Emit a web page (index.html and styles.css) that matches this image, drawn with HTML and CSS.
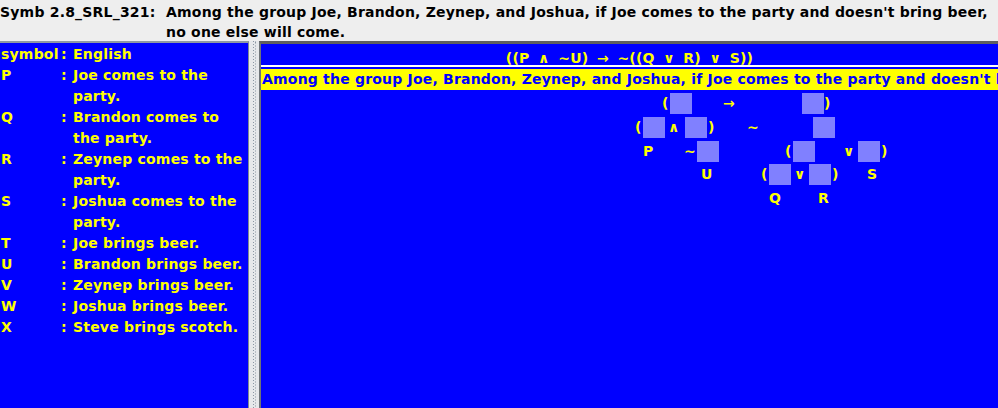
FILE: index.html
```html
<!DOCTYPE html>
<html>
<head>
<meta charset="utf-8">
<link rel="stylesheet" href="styles.css">
</head>
<body>
<header class="top">
  <div class="label">Symb 2.8_SRL_321:</div>
  <div class="desc">Among the group Joe, Brandon, Zeynep, and Joshua, if Joe comes to the party and doesn't bring beer, no one else will come.</div>
</header>
<main class="main">
  <section class="legend">
    <div class="row"><span class="sym">symbol</span><span class="colon">:</span><span class="eng">English</span></div>
    <div class="row"><span class="sym">P</span><span class="colon">:</span><span class="eng">Joe comes to the party.</span></div>
    <div class="row"><span class="sym">Q</span><span class="colon">:</span><span class="eng">Brandon comes to the party.</span></div>
    <div class="row"><span class="sym">R</span><span class="colon">:</span><span class="eng">Zeynep comes to the party.</span></div>
    <div class="row"><span class="sym">S</span><span class="colon">:</span><span class="eng">Joshua comes to the party.</span></div>
    <div class="row"><span class="sym">T</span><span class="colon">:</span><span class="eng">Joe brings beer.</span></div>
    <div class="row"><span class="sym">U</span><span class="colon">:</span><span class="eng">Brandon brings beer.</span></div>
    <div class="row"><span class="sym">V</span><span class="colon">:</span><span class="eng">Zeynep brings beer.</span></div>
    <div class="row"><span class="sym">W</span><span class="colon">:</span><span class="eng">Joshua brings beer.</span></div>
    <div class="row"><span class="sym">X</span><span class="colon">:</span><span class="eng">Steve brings scotch.</span></div>
  </section>
  <div class="splitter"><span class="grip"></span><span class="grip grip2"></span></div>
  <section class="work">
    <div class="formula">((P ∧ ~U) → ~((Q ∨ R) ∨ S))</div>
    <div class="sentence">Among the group Joe, Brandon, Zeynep, and Joshua, if Joe comes to the party and doesn't bring beer, no one else will come.</div>
    <div class="tree">
      <span class="box r1" style="left:409px"></span>
      <span class="box r1" style="left:541px"></span>
      <span class="box r2" style="left:382px"></span>
      <span class="box r2" style="left:424px"></span>
      <span class="box r2" style="left:552px"></span>
      <span class="box r3" style="left:436px"></span>
      <span class="box r3" style="left:532px"></span>
      <span class="box r3" style="left:597px"></span>
      <span class="box r4" style="left:508px"></span>
      <span class="box r4" style="left:548px"></span>

      <span class="g r1" style="left:401px">(</span>
      <span class="g r1" style="left:462px">→</span>
      <span class="g r1" style="left:563px">)</span>

      <span class="g r2" style="left:374px">(</span>
      <span class="g r2" style="left:407px">∧</span>
      <span class="g r2" style="left:447px">)</span>
      <span class="g r2" style="left:486px">~</span>

      <span class="g r3" style="left:382px">P</span>
      <span class="g r3" style="left:423px">~</span>
      <span class="g r3" style="left:524px">(</span>
      <span class="g r3" style="left:582px">∨</span>
      <span class="g r3" style="left:620px">)</span>

      <span class="g r4" style="left:440px">U</span>
      <span class="g r4" style="left:500px">(</span>
      <span class="g r4" style="left:533px">∨</span>
      <span class="g r4" style="left:571px">)</span>
      <span class="g r4" style="left:606px">S</span>

      <span class="g r5" style="left:508px">Q</span>
      <span class="g r5" style="left:557px">R</span>
    </div>
  </section>
</main>
</body>
</html>
```

FILE: styles.css
```css
* { box-sizing: border-box; }
html, body { margin: 0; padding: 0; }
body {
  width: 998px;
  height: 408px;
  overflow: hidden;
  font-family: "DejaVu Sans", sans-serif;
  font-weight: bold;
  font-size: 14px;
  letter-spacing: 0.2px;
  background: #0000ff;
}
.top {
  display: flex;
  height: 41px;
  background: #eeeeee;
  color: #000000;
  line-height: 20px;
  padding-top: 2px;
}
.label {
  flex: 0 0 166px;
  white-space: nowrap;
}
.desc {
  flex: 1 1 auto;
  padding-right: 4px;
}
.main {
  display: flex;
  height: 367px;
}
.legend {
  flex: 0 0 249px;
  background: #0000ff;
  border-top: 2px solid #8f99a3;
  border-right: 1px solid #7d8a93;
  color: #ffff00;
  padding-left: 1px;
  padding-top: 1px;
  line-height: 21px;
}
.row {
  display: grid;
  grid-template-columns: 59px 13px 171px;
}
.colon { padding-left: 1px; }
.splitter {
  flex: 0 0 10px;
  background: #e6e8ea;
  display: flex;
  justify-content: center;
  gap: 1px;
  padding-left: 1px;
}
.grip {
  width: 1px;
  background: repeating-linear-gradient(to bottom, #8a96a2 0 1px, transparent 1px 3px);
}
.grip2 { background-position: 0 1.5px; }
.work {
  flex: 1 1 auto;
  min-width: 0;
  background: #0000ff;
  border-top: 3px solid #5f5f5f;
  border-left: 2px solid #6e7478;
  display: flex;
  flex-direction: column;
}
.formula {
  height: 23px;
  padding-top: 7px;
  line-height: 14px;
  text-align: center;
  color: #ffff00;
  white-space: pre;
  word-spacing: 3.5px;
  border-bottom: 2px solid #ffffff;
  margin-bottom: 2px;
}
.sentence {
  flex: 0 0 21px;
  height: 21px;
  line-height: 21px;
  background: #ffff00;
  color: #0000ff;
  white-space: nowrap;
  overflow: hidden;
  padding-left: 1px;
}
.tree {
  position: relative;
  flex: 1 1 auto;
}
.box {
  position: absolute;
  width: 22px;
  height: 21px;
  background: #8080ff;
}
.g {
  position: absolute;
  line-height: 21px;
  color: #ffff00;
  white-space: nowrap;
}
.r1 { top: 3px; }
.r2 { top: 27px; }
.r3 { top: 51px; }
.r4 { top: 74px; }
.r5 { top: 98px; }
```
